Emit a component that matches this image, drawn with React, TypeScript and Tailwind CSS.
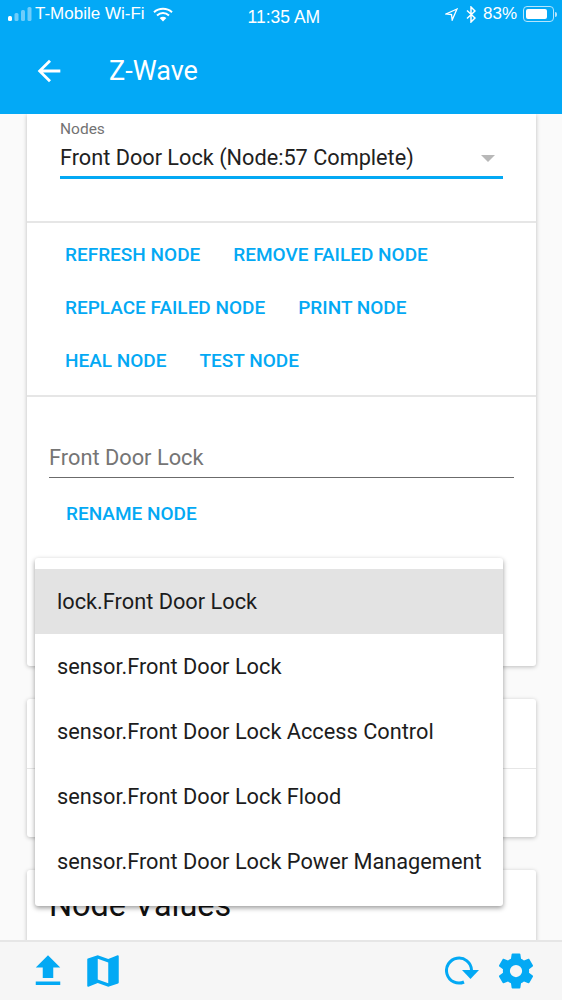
import React from "react";

const menuItems = [
  "lock.Front Door Lock",
  "sensor.Front Door Lock",
  "sensor.Front Door Lock Access Control",
  "sensor.Front Door Lock Flood",
  "sensor.Front Door Lock Power Management",
];

function MdIcon({ d, className }: { d: string; className?: string }) {
  return (
    <svg viewBox="0 0 24 24" className={className} fill="currentColor">
      <path d={d} />
    </svg>
  );
}

function ActionButton({ label }: { label: string }) {
  return (
    <button className="h-[53px] px-[16.5px] text-[19px] font-medium text-[#03a9f4] whitespace-nowrap">
      {label}
    </button>
  );
}

function StatusBar() {
  return (
    <div className="h-[28px] relative flex items-center justify-between pl-[8px] pr-[5px] text-white text-[17px] font-['Liberation_Sans',sans-serif]">
      <div className="flex items-center">
        {/* signal bars */}
        <svg width="24" height="14" viewBox="0 0 24 14" className="mr-[3px]">
          <rect x="0" y="9" width="4" height="5" rx="1.5" fill="#ffffff" />
          <rect x="6.5" y="6" width="4" height="8" rx="1.5" fill="#6fcdfa" />
          <rect x="13" y="3" width="4" height="11" rx="1.5" fill="#6fcdfa" />
          <rect x="19.5" y="0" width="4" height="14" rx="1.5" fill="#6fcdfa" />
        </svg>
        <span>T-Mobile Wi-Fi</span>
        <svg width="20" height="15" viewBox="0 0 20 15" className="ml-[8px]" fill="none" stroke="#ffffff" strokeWidth="2">
          <path d="M1 5.2 C6 0.6 14 0.6 19 5.2" />
          <path d="M4 8.4 C7.5 5.2 12.5 5.2 16 8.4" />
          <path d="M10 14.5 L6.6 11 C8.6 9.4 11.4 9.4 13.4 11 Z" fill="#ffffff" stroke="none" />
        </svg>
      </div>
      <span className="absolute left-[247.5px] top-[4px] text-[17.5px]">11:35 AM</span>
      <div className="flex items-center">
        <svg width="13" height="13" viewBox="0 0 13 13" fill="none" stroke="#ffffff" strokeWidth="1.3" className="mr-[8px]">
          <path d="M12 1 L1 6 L6.5 6.7 L7.2 12 Z" />
        </svg>
        <svg width="10" height="17" viewBox="0 0 10 17" fill="none" stroke="#ffffff" strokeWidth="1.5" className="mr-[7px]">
          <path d="M1 4.5 L9 12 L5 16 V1 L9 5 L1 12.5" />
        </svg>
        <span className="mr-[6px]">83%</span>
        <div className="w-[31px] h-[16px] rounded-[4px] border border-[#b5e5fc] p-[2px]">
          <div className="h-full w-[83%] rounded-[2px] bg-white" />
        </div>
        <div className="w-[2px] h-[5px] ml-[1px] rounded-r bg-[#b5e5fc]" />
      </div>
    </div>
  );
}

export default function App() {
  return (
    <div className="relative w-[562px] h-[1000px] overflow-hidden flex flex-col bg-[#fafafa] font-['Roboto',sans-serif]">
      <header className="h-[114px] shrink-0 bg-[#03a9f6] text-white">
        <StatusBar />
        <div className="flex items-center h-[86px] pl-[32px]">
          <MdIcon
            className="w-[34px] h-[34px]"
            d="M20 11H7.83l5.59-5.59L12 4l-8 8 8 8 1.41-1.41L7.83 13H20v-2z"
          />
          <h1 className="ml-[43px] text-[27px] leading-none">Z-Wave</h1>
        </div>
      </header>

      <main className="flex-1 min-h-0 overflow-hidden pl-[27px] pr-[26px] flex flex-col gap-[33px]">
        {/* node picker + actions */}
        <section className="h-[552px] shrink-0 bg-white rounded-b-[3px] shadow-[0_1px_4px_rgba(0,0,0,0.25)]">
          <div className="h-[109px] border-b-2 border-[#e6e6e6] px-[33px] pt-[6px]">
            <div className="text-[15.5px] leading-[18px] text-[#737373]">Nodes</div>
            <div className="relative h-[38px] mt-[3px] border-b-[3px] border-[#03a9f4] text-[21.7px] leading-[34px] text-[#212121] whitespace-nowrap">
              Front Door Lock (Node:57 Complete)
              <div className="absolute right-[8px] top-[14px] w-0 h-0 border-x-[7px] border-x-transparent border-t-[7px] border-t-[#b8b8b8]" />
            </div>
          </div>
          <div className="h-[174px] border-b-2 border-[#e6e6e6] pl-[21.5px] pt-[6px]">
            <div className="flex">
              <ActionButton label="REFRESH NODE" />
              <ActionButton label="REMOVE FAILED NODE" />
            </div>
            <div className="flex">
              <ActionButton label="REPLACE FAILED NODE" />
              <ActionButton label="PRINT NODE" />
            </div>
            <div className="flex">
              <ActionButton label="HEAL NODE" />
              <ActionButton label="TEST NODE" />
            </div>
          </div>
          <div className="px-[22px] pt-[44px]">
            <div className="h-[37px] border-b border-[#6b6b6b] text-[21.8px] leading-[34px] text-[#757575]">
              Front Door Lock
            </div>
            <div className="ml-[0.5px] mt-[10px]">
              <ActionButton label="RENAME NODE" />
            </div>
          </div>
        </section>

        <section className="h-[138px] shrink-0 bg-white rounded-[3px] shadow-[0_1px_4px_rgba(0,0,0,0.25)]">
          <div className="h-[70px] border-b border-[#e6e6e6]" />
        </section>

        <section className="h-[120px] shrink-0 bg-white rounded-t-[3px] shadow-[0_1px_4px_rgba(0,0,0,0.25)] pl-[22px] pt-[16px]">
          <h2 className="text-[32.4px] leading-[38px] text-[#111111]">Node Values</h2>
        </section>
      </main>

      <footer className="h-[60px] shrink-0 relative bg-[#f6f6f6] border-t-2 border-[#e6e6e6] flex items-center justify-between pl-[27px] pr-[25px] pb-[1px] text-[#03a9f4]">
        <div className="flex items-center gap-[13px]">
          <MdIcon className="w-[42px] h-[42px]" d="M9 16h6v-6h4l-7-7-7 7h4zm-4 2h14v2H5z" />
          <MdIcon
            className="w-[42px] h-[42px]"
            d="M20.5 3l-.16.03L15 5.1 9 3 3.36 4.9c-.21.07-.36.25-.36.48V20.5c0 .28.22.5.5.5l.16-.03L9 18.9l6 2.1 5.64-1.9c.21-.07.36-.25.36-.48V3.5c0-.28-.22-.5-.5-.5zM15 19l-6-2.11V5l6 2.11V19z"
          />
        </div>
        <div className="flex items-center gap-[15px]">
          <svg viewBox="0 0 35 31" className="w-[35px] h-[31px]" fill="none">
            <path d="M26.5 15 A12.5 12.5 0 1 0 19 27" stroke="currentColor" strokeWidth="3" />
            <path d="M17 15 H34 L25.5 24 Z" fill="currentColor" />
          </svg>
          <MdIcon
            className="w-[42px] h-[42px]"
            d="M12,15.5A3.5,3.5 0 0,1 8.5,12A3.5,3.5 0 0,1 12,8.5A3.5,3.5 0 0,1 15.5,12A3.5,3.5 0 0,1 12,15.5M19.43,12.97C19.47,12.65 19.5,12.33 19.5,12C19.5,11.67 19.47,11.34 19.43,11L21.54,9.37C21.73,9.22 21.78,8.95 21.66,8.73L19.66,5.27C19.54,5.05 19.27,4.96 19.05,5.05L16.56,6.05C16.04,5.66 15.5,5.32 14.87,5.07L14.5,2.42C14.46,2.18 14.25,2 14,2H10C9.75,2 9.54,2.18 9.5,2.42L9.13,5.07C8.5,5.32 7.96,5.66 7.44,6.05L4.95,5.05C4.73,4.96 4.46,5.05 4.34,5.27L2.34,8.73C2.21,8.95 2.27,9.22 2.46,9.37L4.57,11C4.53,11.34 4.5,11.67 4.5,12C4.5,12.33 4.53,12.65 4.57,12.97L2.46,14.63C2.27,14.78 2.21,15.05 2.34,15.27L4.34,18.73C4.46,18.95 4.73,19.03 4.95,18.95L7.44,17.94C7.96,18.34 8.5,18.68 9.13,18.93L9.5,21.58C9.54,21.82 9.75,22 10,22H14C14.25,22 14.46,21.82 14.5,21.58L14.87,18.93C15.5,18.67 16.04,18.34 16.56,17.94L19.05,18.95C19.27,19.03 19.54,18.95 19.66,18.73L21.66,15.27C21.78,15.05 21.73,14.78 21.54,14.63L19.43,12.97Z"
          />
        </div>
      </footer>

      {/* entity dropdown, open over the cards */}
      <ul className="absolute left-[35px] top-[558px] w-[468px] h-[348px] pt-[11px] bg-white rounded-[3px] shadow-[0_2px_5px_rgba(0,0,0,0.4)]">
        {menuItems.map((item, i) => (
          <li
            key={item}
            className={`h-[65px] flex items-center pl-[22px] pt-[1px] text-[21.75px] text-[#1c1c1c] whitespace-nowrap ${i === 0 ? "bg-[#e3e3e3]" : ""}`}
          >
            {item}
          </li>
        ))}
      </ul>
    </div>
  );
}
